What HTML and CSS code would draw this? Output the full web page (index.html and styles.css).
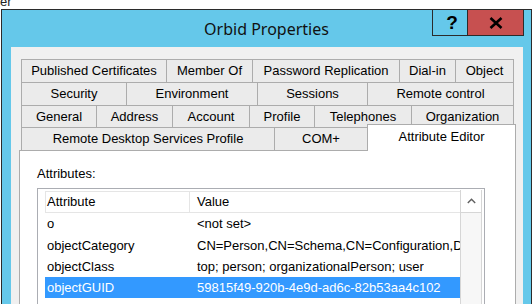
FILE: index.html
```html
<!DOCTYPE html>
<html>
<head>
<meta charset="utf-8">
<link rel="stylesheet" href="styles.css">
</head>
<body>
<div class="desk-text"><span>er</span></div>
<div class="window">
  <div class="titlebar">
    <div class="tb-spacer"></div>
    <div class="title">Orbid Properties</div>
    <div class="caption-btns">
      <div class="cbtn help">?</div>
      <div class="cbtn close">
        <svg width="14" height="12" viewBox="0 0 14 12"><path d="M1.5 1 L12.5 11 M12.5 1 L1.5 11" stroke="#000" stroke-width="2.6" fill="none"/></svg>
      </div>
    </div>
  </div>
  <div class="client">
    <div class="tabs">
      <div class="tab-row r1">
        <div class="tab">Published Certificates</div>
        <div class="tab">Member Of</div>
        <div class="tab">Password Replication</div>
        <div class="tab">Dial-in</div>
        <div class="tab">Object</div>
      </div>
      <div class="tab-row r2">
        <div class="tab">Security</div>
        <div class="tab">Environment</div>
        <div class="tab">Sessions</div>
        <div class="tab">Remote control</div>
      </div>
      <div class="tab-row r3">
        <div class="tab">General</div>
        <div class="tab">Address</div>
        <div class="tab">Account</div>
        <div class="tab">Profile</div>
        <div class="tab">Telephones</div>
        <div class="tab">Organization</div>
      </div>
      <div class="tab-row r4">
        <div class="tab">Remote Desktop Services Profile</div>
        <div class="tab">COM+</div>
        <div class="tab selected">Attribute Editor</div>
      </div>
    </div>
    <div class="panel">
      <div class="label">Attributes:</div>
      <div class="listbox">
        <div class="list">
          <div class="lv-header">
            <div class="c1">Attribute</div>
            <div class="c2">Value</div>
          </div>
          <div class="lv-row"><div class="c1">o</div><div class="c2">&lt;not set&gt;</div></div>
          <div class="lv-row"><div class="c1">objectCategory</div><div class="c2">CN=Person,CN=Schema,CN=Configuration,DC=orbid,DC=local</div></div>
          <div class="lv-row"><div class="c1">objectClass</div><div class="c2">top; person; organizationalPerson; user</div></div>
          <div class="lv-row sel"><div class="c1">objectGUID</div><div class="c2">59815f49-920b-4e9d-ad6c-82b53aa4c102</div></div>
          <div class="lv-row"><div class="c1">objectSid</div><div class="c2">S-1-5-21-2563228381-1905058079-3772575219-1109</div></div>
        </div>
        <div class="vscroll">
          <div class="sb-up">
            <svg width="9" height="6" viewBox="0 0 9 6"><path d="M0.8 5 L4.5 1.3 L8.2 5" stroke="#606060" stroke-width="1.4" fill="none"/></svg>
          </div>
          <div class="sb-track"></div>
        </div>
      </div>
    </div>
  </div>
</div>
</body>
</html>
```

FILE: styles.css
```css
html, body {
  margin: 0;
  padding: 0;
}
body {
  width: 532px;
  height: 304px;
  overflow: hidden;
  background: #ffffff;
  font-family: "Liberation Sans", Arial, sans-serif;
  font-size: 13px;
  color: #000;
}

.desk-text {
  height: 9px;
  overflow: hidden;
  font-size: 13px;
  line-height: 9px;
  color: #222;
}
.desk-text span {
  display: block;
  margin-top: -3px;
}

.window {
  margin-left: 1px;
  width: 531px;
  height: 330px;
  box-sizing: border-box;
  border: 1px solid #2b2b2b;
  background: #65c8ea;
  display: flex;
  flex-direction: column;
}

.titlebar {
  height: 37px;
  flex: none;
  display: grid;
  grid-template-columns: 1fr auto 1fr;
  align-items: center;
}
.title {
  font-family: "Noto Sans", "Open Sans", sans-serif;
  font-size: 16px;
  color: #111;
  white-space: nowrap;
}
.caption-btns {
  justify-self: end;
  align-self: start;
  margin-top: -1px;
  margin-right: 7px;
  height: 27px;
  box-sizing: border-box;
  border: 1px solid #2b2b2b;
  display: flex;
}
.cbtn {
  display: flex;
  align-items: center;
  justify-content: center;
}
.help {
  box-sizing: border-box;
  width: 35px;
  border-right: 1px solid #2b2b2b;
  font-family: "Liberation Sans", Arial, sans-serif;
  font-weight: bold;
  font-size: 19px;
  padding-left: 4px;
  color: #000;
}
.close {
  width: 55px;
  background: #c75050;
}

.client {
  flex: 1;
  margin: 0 8px 0 9px;
  background: #f0f0f0;
  padding: 12px 0 0 8px;
  display: flex;
  flex-direction: column;
}

.tabs {
  width: 497px;
}
.tab-row {
  display: grid;
  padding-left: 2px;
}
.r1 { height: 23px; grid-template-columns: 145px 86px 147px 56px 59px; }
.r2 { height: 23px; grid-template-columns: 105px 131px 110px 147px; }
.r3 { height: 22px; grid-template-columns: 75px 76px 77px 65px 97px 103px; }
.r4 { height: 23px; grid-template-columns: 253px 93px 149px; }

.tab {
  box-sizing: border-box;
  border-top: 1px solid #acacac;
  border-left: 1px solid #acacac;
  background: #ebebeb;
  text-align: center;
  line-height: 22px;
  white-space: nowrap;
  overflow: hidden;
}
.tab:last-child {
  border-right: 1px solid #acacac;
}
.r3 .tab { line-height: 21px; }

.tab.selected {
  position: relative;
  z-index: 1;
  align-self: start;
  margin-top: -3px;
  height: 27px;
  line-height: 23px;
  background: #ffffff;
}

.panel {
  flex: 1;
  width: 497px;
  box-sizing: border-box;
  background: #ffffff;
  border: 1px solid #acacac;
  padding: 15px 0 0 17px;
}
.label {
  line-height: 16px;
  height: 16px;
}
.listbox {
  margin-top: 6px;
  width: 448px;
  height: 140px;
  box-sizing: border-box;
  border: 1px solid #abadb3;
  padding: 1px 2px 0 7px;
  display: flex;
}
.list {
  width: 415px;
  overflow: hidden;
}
.lv-header {
  display: flex;
  height: 22px;
  box-sizing: border-box;
  margin-top: 1px;
  border-top: 1px solid #e5e5e5;
  border-left: 1px solid #e5e5e5;
  border-bottom: 1px solid #e5e5e5;
  line-height: 20px;
}
.lv-header .c1 {
  width: 144px;
  padding-left: 1px;
  box-sizing: border-box;
  border-right: 1px solid #e5e5e5;
  flex: none;
}
.lv-header .c2 {
  padding-left: 7px;
}
.lv-row {
  display: flex;
  height: 21px;
  line-height: 21px;
  white-space: nowrap;
}
.lv-row:nth-child(2) {
  height: 22px;
}
.lv-row .c1 {
  width: 145px;
  flex: none;
  padding-left: 2px;
  box-sizing: border-box;
  overflow: hidden;
}
.lv-row .c2 {
  padding-left: 7px;
  overflow: hidden;
}
.lv-row.sel {
  background: #3399ff;
  color: #ffffff;
}

.vscroll {
  width: 22px;
  box-sizing: border-box;
  border-left: 1px solid #d6d6d6;
  border-right: 1px solid #d6d6d6;
  background: #f7f7f7;
  display: flex;
  flex-direction: column;
}
.sb-up {
  height: 23px;
  box-sizing: border-box;
  border-bottom: 1px solid #d6d6d6;
  display: flex;
  align-items: center;
  justify-content: center;
  background: #ffffff;
}
.sb-track {
  flex: 1;
}
```
